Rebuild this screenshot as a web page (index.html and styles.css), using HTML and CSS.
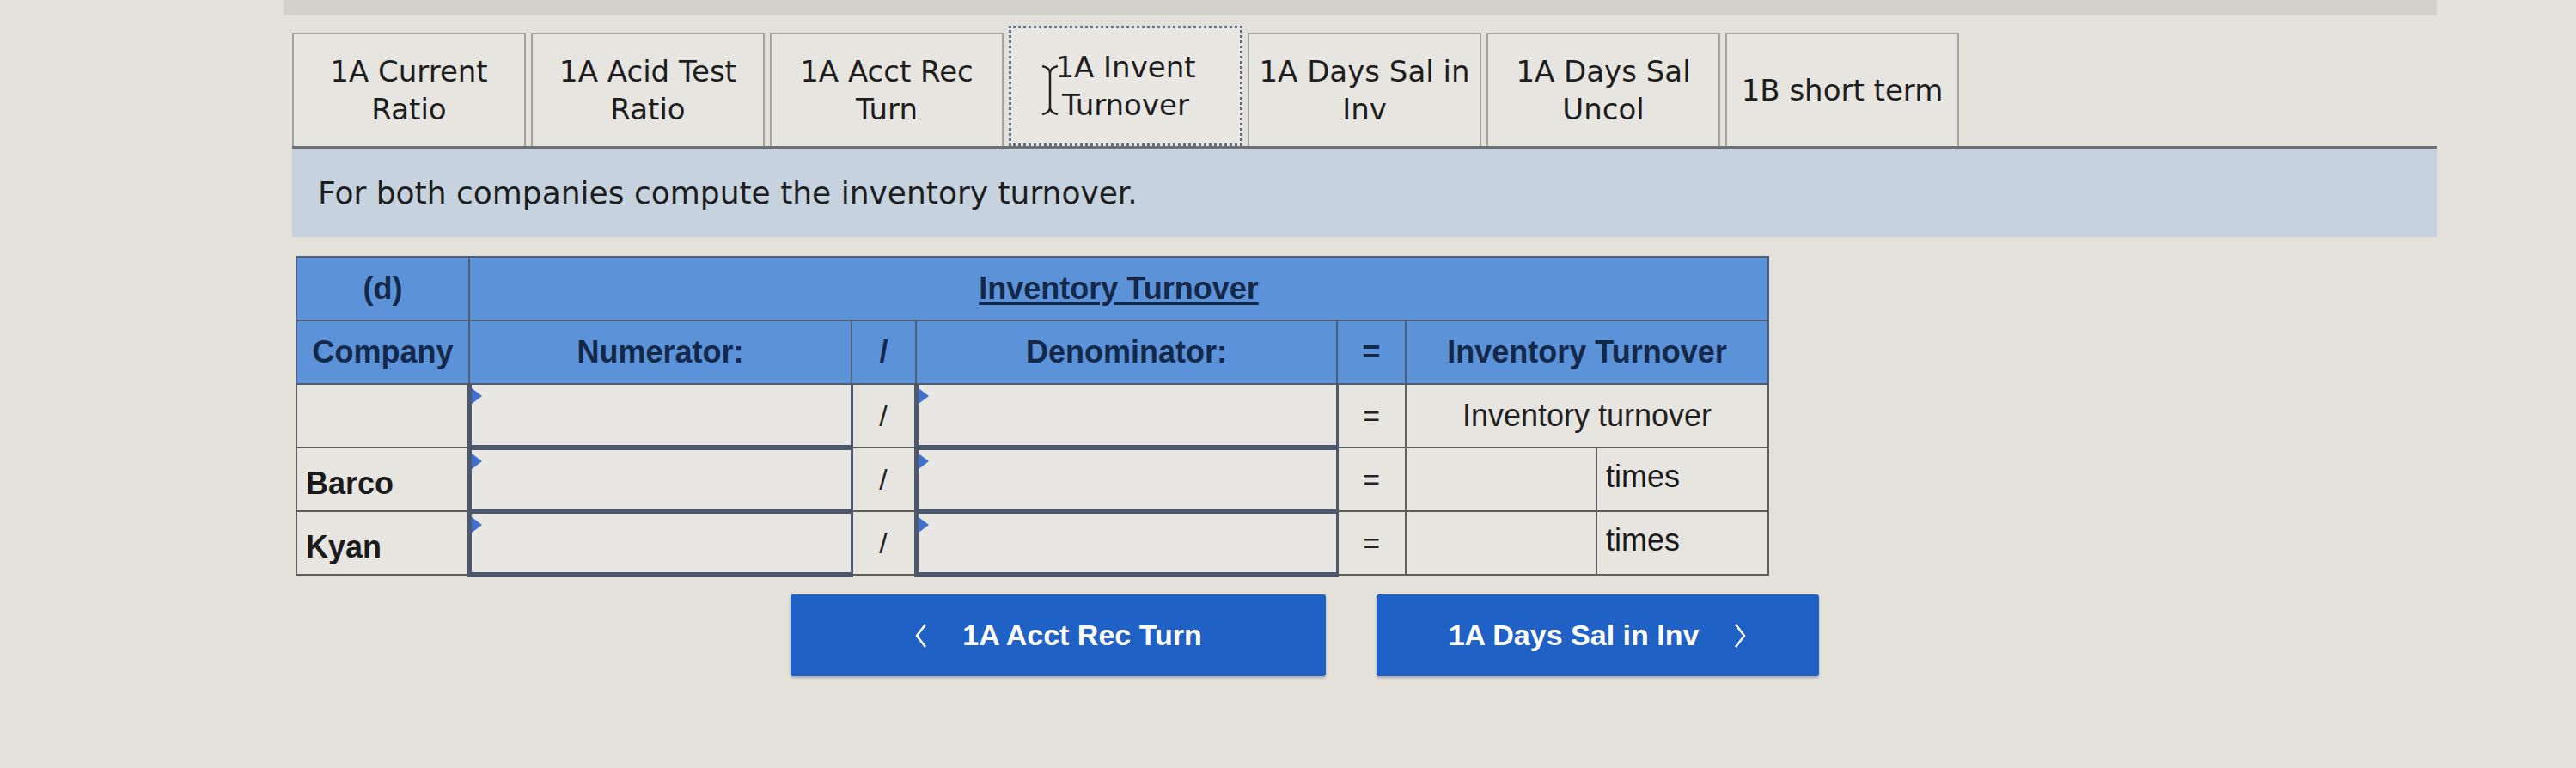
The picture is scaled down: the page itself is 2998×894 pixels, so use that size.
FILE: index.html
```html
<!DOCTYPE html>
<html lang="en">
<head>
<meta charset="utf-8">
<title>Inventory Turnover</title>
<link rel="stylesheet" href="styles.css">
</head>
<body>
<div class="page">
  <div class="topbar"></div>
  <div class="tabs">
    <div class="tab">1A Current<br>Ratio</div>
    <div class="tab">1A Acid Test<br>Ratio</div>
    <div class="tab">1A Acct Rec<br>Turn</div>
    <div class="tab active">1A Invent<br>Turnover
      <svg class="ibeam" width="22" height="60" viewBox="0 0 22 60"><path d="M2 2 Q11 4 11 10 L11 50 Q11 56 2 58 M20 2 Q11 4 11 10 M11 50 Q11 56 20 58" fill="none" stroke="#222" stroke-width="2.5"/></svg>
    </div>
    <div class="tab">1A Days Sal in<br>Inv</div>
    <div class="tab">1A Days Sal<br>Uncol</div>
    <div class="tab">1B short term</div>
  </div>
  <div class="band">For both companies compute the inventory turnover.</div>
  <table class="calc">
    <colgroup>
      <col class="c-co"><col class="c-num"><col class="c-div"><col class="c-den"><col class="c-eq"><col class="c-val"><col class="c-unit">
    </colgroup>
    <tr class="hd">
      <th>(d)</th>
      <th colspan="6"><span class="ul">Inventory Turnover</span></th>
    </tr>
    <tr class="hd">
      <th>Company</th>
      <th>Numerator:</th>
      <th>/</th>
      <th>Denominator:</th>
      <th>=</th>
      <th colspan="2">Inventory Turnover</th>
    </tr>
    <tr>
      <td class="co"></td>
      <td class="inp"></td>
      <td class="op">/</td>
      <td class="inp"></td>
      <td class="op">=</td>
      <td colspan="2" class="lbl">Inventory turnover</td>
    </tr>
    <tr>
      <td class="co">Barco</td>
      <td class="inp"></td>
      <td class="op">/</td>
      <td class="inp"></td>
      <td class="op">=</td>
      <td class="val"></td>
      <td class="unit">times</td>
    </tr>
    <tr>
      <td class="co">Kyan</td>
      <td class="inp"></td>
      <td class="op">/</td>
      <td class="inp"></td>
      <td class="op">=</td>
      <td class="val"></td>
      <td class="unit">times</td>
    </tr>
  </table>
  <div class="nav">
    <button class="btn prev">
      <svg width="16" height="30" viewBox="0 0 16 30"><path d="M13 2 L3 15 L13 28" fill="none" stroke="#fff" stroke-width="2.5"/></svg>
      <span>1A Acct Rec Turn</span>
    </button>
    <button class="btn next">
      <span>1A Days Sal in Inv</span>
      <svg width="16" height="30" viewBox="0 0 16 30"><path d="M3 2 L13 15 L3 28" fill="none" stroke="#fff" stroke-width="2.5"/></svg>
    </button>
  </div>
</div>
</body>
</html>
```

FILE: styles.css
```css
html, body {
  margin: 0;
  padding: 0;
}
body {
  background: #e4e1db;
  width: 2998px;
  height: 894px;
  overflow: hidden;
}
.page {
  margin-left: 330px;
  width: 2506px;
}
.topbar {
  height: 18px;
  background: #d3d1cc;
}
.tabs {
  display: flex;
  align-items: flex-end;
  gap: 6px;
  margin-left: 10px;
  margin-top: 14px;
  height: 138px;
}
.tab {
  position: relative;
  box-sizing: border-box;
  width: 272px;
  height: 132px;
  border: 2px solid #a4a29d;
  border-bottom: none;
  background: #e7e5e0;
  display: flex;
  align-items: center;
  justify-content: center;
  text-align: center;
  font-family: "DejaVu Sans", Verdana, sans-serif;
  font-size: 34px;
  line-height: 44px;
  color: #1e1e1e;
}
.tab.active {
  height: 140px;
  border: 3px dotted #5d6c86;
  background: #e9e7e2;
}
.ibeam {
  position: absolute;
  left: 34px;
  top: 42px;
}
.band {
  margin-left: 10px;
  width: 2496px;
  height: 106px;
  box-sizing: border-box;
  border-top: 3px solid #707070;
  background: #c6d3de;
  display: flex;
  align-items: center;
  padding-left: 30px;
  font-family: "DejaVu Sans", Verdana, sans-serif;
  font-size: 36px;
  color: #1e1e1e;
}
.calc {
  margin-left: 14px;
  margin-top: 22px;
  border-collapse: collapse;
  table-layout: fixed;
  width: 1713px;
  font-family: "Liberation Sans", Arial, sans-serif;
  font-size: 36px;
  color: #1b1b1b;
}
.c-co { width: 201px; }
.c-num { width: 445px; }
.c-div { width: 75px; }
.c-den { width: 490px; }
.c-eq { width: 80px; }
.c-val { width: 222px; }
.c-unit { width: 200px; }
.calc tr {
  height: 74px;
}
.calc th, .calc td {
  border: 2px solid #5e5e5e;
  padding: 0;
  text-align: center;
  vertical-align: middle;
}
.calc th {
  background: #5c93d8;
  color: #14284a;
  font-weight: bold;
  border-color: #4d5d74;
}
.ul {
  text-decoration: underline;
  text-underline-offset: 4px;
}
.calc td {
  background: #e7e5e0;
}
.calc td.co {
  text-align: left;
  padding-left: 10px;
  font-weight: bold;
  vertical-align: bottom;
  padding-bottom: 10px;
}
.calc td.inp {
  position: relative;
  border-left: 5px solid #4d586c;
  border-bottom: 6px solid #4d586c;
  border-right: 3px solid #4d586c;
  background: #e9e7e3;
}
.calc td.inp::before {
  content: "";
  position: absolute;
  left: 0;
  top: 4px;
  border-top: 9px solid transparent;
  border-bottom: 9px solid transparent;
  border-left: 12px solid #3f70cc;
}
.calc td.op {
  font-size: 34px;
  color: #222;
}
.calc td.lbl {
  color: #222;
}
.calc td.unit {
  text-align: left;
  padding-left: 10px;
  vertical-align: top;
  padding-top: 12px;
}
.nav {
  display: flex;
  gap: 59px;
  margin-left: 590px;
  margin-top: 20px;
}
.btn {
  height: 95px;
  border: none;
  border-radius: 3px;
  background: #1f61c5;
  color: #fff;
  font-family: "Liberation Sans", Arial, sans-serif;
  font-weight: bold;
  font-size: 34px;
  display: flex;
  align-items: center;
  justify-content: center;
  gap: 40px;
  box-shadow: 0 2px 3px rgba(0, 0, 0, 0.25);
  padding: 0;
}
.btn.prev {
  width: 623px;
}
.btn.next {
  width: 515px;
}
```
